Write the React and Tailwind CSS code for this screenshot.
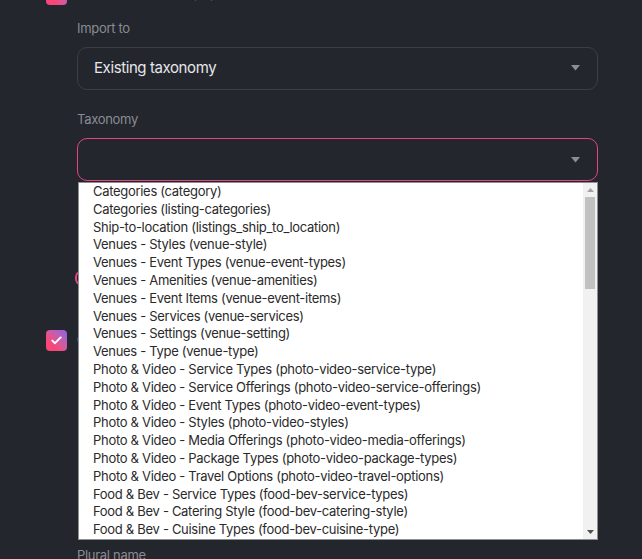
// Taxonomy import form — the "Taxonomy" select is open, native-style listbox over the form.
const OPTIONS = [
  'Categories (category)',
  'Categories (listing-categories)',
  'Ship-to-location (listings_ship_to_location)',
  'Venues - Styles (venue-style)',
  'Venues - Event Types (venue-event-types)',
  'Venues - Amenities (venue-amenities)',
  'Venues - Event Items (venue-event-items)',
  'Venues - Services (venue-services)',
  'Venues - Settings (venue-setting)',
  'Venues - Type (venue-type)',
  'Photo & Video - Service Types (photo-video-service-type)',
  'Photo & Video - Service Offerings (photo-video-service-offerings)',
  'Photo & Video - Event Types (photo-video-event-types)',
  'Photo & Video - Styles (photo-video-styles)',
  'Photo & Video - Media Offerings (photo-video-media-offerings)',
  'Photo & Video - Package Types (photo-video-package-types)',
  'Photo & Video - Travel Options (photo-video-travel-options)',
  'Food & Bev - Service Types (food-bev-service-types)',
  'Food & Bev - Catering Style (food-bev-catering-style)',
  'Food & Bev - Cuisine Types (food-bev-cuisine-type)',
];

const font = { fontFamily: 'Inter, "Liberation Sans", sans-serif' };

function Checkbox({ checked }) {
  return (
    <div className="flex size-[21px] shrink-0 items-center justify-center rounded-[4px] bg-gradient-to-tr from-[#f7477a] from-30% to-[#8a5fe2]">
      {checked && (
        <svg width="11" height="9" viewBox="0 0 11 9" fill="none">
          <path d="M1.3 4.6 4 7.2 9.7 1.4" stroke="white" strokeWidth="1.9" strokeLinecap="round" strokeLinejoin="round" />
        </svg>
      )}
    </div>
  );
}

function Caret() {
  return (
    <svg width="9" height="6" viewBox="0 0 9 6" className="shrink-0">
      <path d="M0 0h9L4.5 5.5z" fill="#8c8e94" />
    </svg>
  );
}

function SelectBox({ value, focused }) {
  return (
    <div
      className={`flex h-[43px] items-center justify-between rounded-[10px] border pl-[16px] pr-[17px] ${
        focused ? 'border-[#e2457f]' : 'border-[#3b3e46]'
      }`}
    >
      <span className="text-[15px] tracking-[-0.4px] text-[#e6e7ea]">{value}</span>
      <Caret />
    </div>
  );
}

function Listbox() {
  return (
    <div className="absolute left-[1px] right-0 top-[44px] z-10 flex h-[358px] border border-[#8f8f8f] bg-white">
      <ul className="flex-1 overflow-hidden pl-[14px]">
        {OPTIONS.map((o) => (
          <li key={o} className="whitespace-nowrap text-[13px] leading-[17.8px] tracking-[-0.3px] text-[#2a2a2a]">
            {o}
          </li>
        ))}
      </ul>
      <div className="flex w-[14px] flex-col bg-[#f1f1f1]">
        <div className="flex h-[14px] items-center justify-center">
          <svg width="7" height="4" viewBox="0 0 7 4"><path d="M0 4h7L3.5 0z" fill="#a3a3a3" /></svg>
        </div>
        <div className="mx-[2px] h-[92px] bg-[#c1c1c1]" />
        <div className="flex-1" />
        <div className="flex h-[14px] items-center justify-center">
          <svg width="7" height="4" viewBox="0 0 7 4"><path d="M0 0h7L3.5 4z" fill="#505050" /></svg>
        </div>
      </div>
    </div>
  );
}

export default function App() {
  return (
    <div className="h-[559px] overflow-hidden bg-[#23262d] pl-[46px] pr-[44px]" style={font}>
      <div className="-mt-[16px] flex items-start gap-[10px]">
        <Checkbox checked />
        <span className="-mt-[3px] text-[15px] text-[#e6e7ea]">Import to existing type</span>
      </div>

      <div className="pl-[31px] pt-[14px]">
        <label className="block text-[13px] tracking-[-0.3px] text-[#8a8c92]">Import to</label>
        <div className="mt-[8px]">
          <SelectBox value="Existing taxonomy" />
        </div>

        <label className="mt-[20px] block text-[13px] tracking-[-0.3px] text-[#8a8c92]">Taxonomy</label>
        <div className="relative mt-[9px]">
          <SelectBox value="" focused />
          <Listbox />
        </div>

        <div className="-ml-[2px] mt-[90px] h-[14px] w-[40px] rounded-l-[6px] border-2 border-r-0 border-[#e2457f]" />
      </div>

      <div className="mt-[44px] flex items-center gap-[10px]">
        <Checkbox checked />
        <span className="text-[15px] text-[#e6e7ea]">Create missing terms</span>
      </div>

      <div className="pl-[31px] pt-[194px]">
        <label className="block text-[13px] tracking-[-0.3px] text-[#8a8c92]">Plural name</label>
      </div>
    </div>
  );
}
